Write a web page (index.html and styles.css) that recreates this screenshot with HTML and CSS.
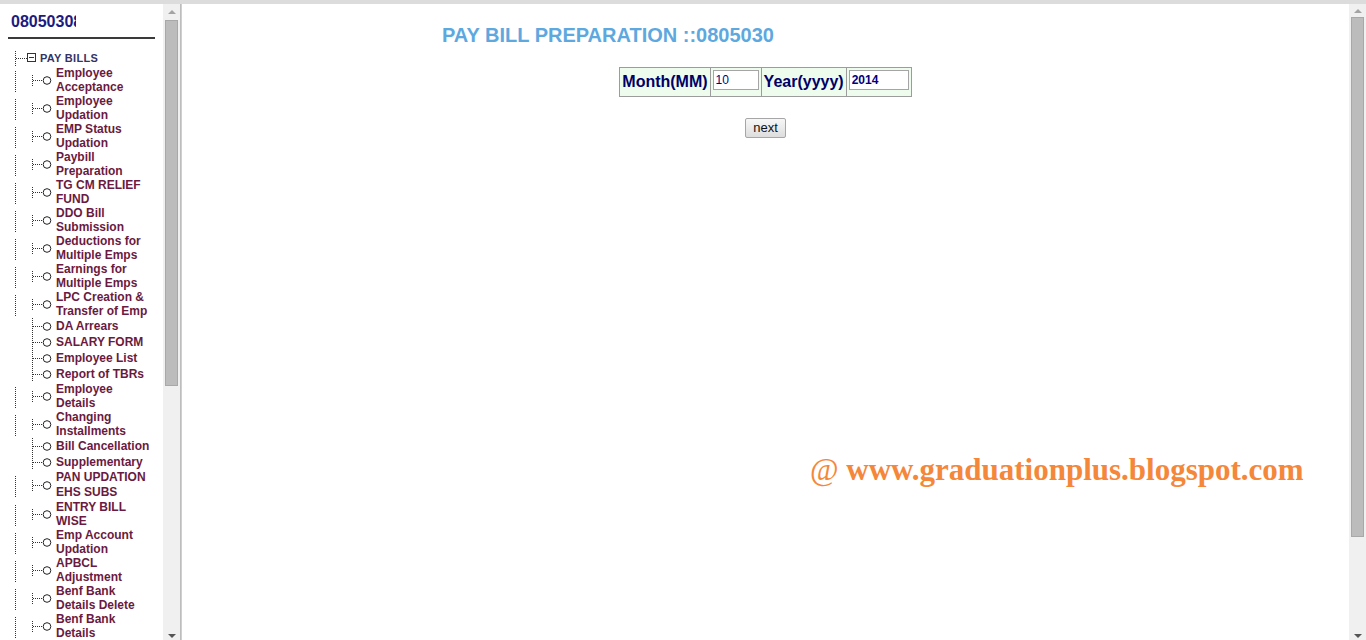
FILE: index.html
```html
<!DOCTYPE html>
<html>
<head>
<meta charset="utf-8">
<title>Pay Bill Preparation</title>
<link rel="stylesheet" href="styles.css">
</head>
<body>
<svg class="defs" width="0" height="0" aria-hidden="true">
  <symbol id="root" viewBox="0 0 40 16">
    <line x1="15.5" y1="1" x2="15.5" y2="16" stroke="#333" stroke-dasharray="1 1"/>
    <line x1="16" y1="8.5" x2="27" y2="8.5" stroke="#333" stroke-dasharray="1 1"/>
    <rect x="27.5" y="3.5" width="8" height="8" fill="#fff" stroke="#333"/>
    <line x1="29" y1="7.5" x2="34" y2="7.5" stroke="#333"/>
  </symbol>
  <symbol id="n1" viewBox="0 0 56 16">
    <line x1="32.5" y1="0" x2="32.5" y2="16" stroke="#333" stroke-dasharray="1 1"/>
    <line x1="33" y1="8.5" x2="43" y2="8.5" stroke="#333" stroke-dasharray="1 1"/>
    <circle cx="47" cy="8.5" r="3.8" fill="#fff" stroke="#222"/>
  </symbol>
  <symbol id="n2" viewBox="0 0 56 28">
    <line x1="15.5" y1="5" x2="15.5" y2="26" stroke="#333" stroke-dasharray="1 1"/>
    <line x1="32.5" y1="9" x2="32.5" y2="21" stroke="#333" stroke-dasharray="1 1"/>
    <line x1="33" y1="14.5" x2="43" y2="14.5" stroke="#333" stroke-dasharray="1 1"/>
    <circle cx="47" cy="14.5" r="3.8" fill="#fff" stroke="#222"/>
  </symbol>
</svg>
<div class="topbar"></div>
<div class="main">
  <aside class="left">
    <div class="left-content">
      <div class="ddo"><span class="ddo-code">08050308</span></div>
      <div class="tree">
        <div class="root"><svg width="40" height="16"><use href="#root"/></svg><span>PAY BILLS</span></div>
        <div class="item"><svg width="56" height="28"><use href="#n2"/></svg><a>Employee Acceptance</a></div>
        <div class="item"><svg width="56" height="28"><use href="#n2"/></svg><a>Employee Updation</a></div>
        <div class="item"><svg width="56" height="28"><use href="#n2"/></svg><a>EMP Status Updation</a></div>
        <div class="item"><svg width="56" height="28"><use href="#n2"/></svg><a>Paybill Preparation</a></div>
        <div class="item"><svg width="56" height="28"><use href="#n2"/></svg><a>TG CM RELIEF FUND</a></div>
        <div class="item"><svg width="56" height="28"><use href="#n2"/></svg><a>DDO Bill Submission</a></div>
        <div class="item"><svg width="56" height="28"><use href="#n2"/></svg><a>Deductions for Multiple Emps</a></div>
        <div class="item"><svg width="56" height="28"><use href="#n2"/></svg><a>Earnings for Multiple Emps</a></div>
        <div class="item"><svg width="56" height="28"><use href="#n2"/></svg><a>LPC Creation &amp; Transfer of Emp</a></div>
        <div class="item"><svg width="56" height="16"><use href="#n1"/></svg><a>DA Arrears</a></div>
        <div class="item"><svg width="56" height="16"><use href="#n1"/></svg><a>SALARY FORM</a></div>
        <div class="item"><svg width="56" height="16"><use href="#n1"/></svg><a>Employee List</a></div>
        <div class="item"><svg width="56" height="16"><use href="#n1"/></svg><a>Report of TBRs</a></div>
        <div class="item"><svg width="56" height="28"><use href="#n2"/></svg><a>Employee Details</a></div>
        <div class="item"><svg width="56" height="28"><use href="#n2"/></svg><a>Changing Installments</a></div>
        <div class="item"><svg width="56" height="16"><use href="#n1"/></svg><a>Bill Cancellation</a></div>
        <div class="item"><svg width="56" height="16"><use href="#n1"/></svg><a>Supplementary</a></div>
        <div class="item tall"><svg width="56" height="28"><use href="#n2"/></svg><a>PAN UPDATION EHS SUBS</a></div>
        <div class="item"><svg width="56" height="28"><use href="#n2"/></svg><a>ENTRY BILL WISE</a></div>
        <div class="item"><svg width="56" height="28"><use href="#n2"/></svg><a>Emp Account Updation</a></div>
        <div class="item"><svg width="56" height="28"><use href="#n2"/></svg><a>APBCL Adjustment</a></div>
        <div class="item"><svg width="56" height="28"><use href="#n2"/></svg><a>Benf Bank Details Delete</a></div>
        <div class="item"><svg width="56" height="28"><use href="#n2"/></svg><a>Benf Bank Details</a></div>
      </div>
    </div>
    <div class="sb">
      <div class="sb-up"></div>
      <div class="thumb"></div>
      <div class="sb-gap"></div>
      <div class="sb-down"></div>
    </div>
  </aside>
  <div class="divider"></div>
  <section class="right">
    <div class="right-content">
      <h1 class="page-title">PAY BILL PREPARATION ::0805030</h1>
      <table class="period">
        <tr>
          <td class="lbl">Month(MM)</td>
          <td><input class="inp inp-month" type="text" value="10"></td>
          <td class="lbl">Year(yyyy)</td>
          <td><input class="inp inp-year" type="text" value="2014"></td>
        </tr>
      </table>
      <button class="next" type="button">next</button>
      <div class="watermark"><span class="at">@</span> www.graduationplus.blogspot.com</div>
    </div>
    <div class="sb">
      <div class="sb-up"></div>
      <div class="thumb"></div>
      <div class="sb-gap"></div>
      <div class="sb-down"></div>
    </div>
  </section>
</div>
</body>
</html>
```
FILE: styles.css
```css
* { box-sizing: border-box; }
html, body { margin: 0; padding: 0; }
body {
  height: 640px;
  overflow: hidden;
  background: #fff;
  font-family: "Liberation Sans", Arial, sans-serif;
  display: flex;
  flex-direction: column;
}
.defs { display: block; width: 0; height: 0; flex: none; }
.topbar { height: 4px; background: #dcdcdc; flex: none; }
.main { flex: 1; display: flex; min-height: 0; }

/* left frame */
.left { width: 180px; flex: none; display: flex; }
.left-content { width: 163px; overflow: hidden; }
.divider { width: 2px; flex: none; background: #cfcfcf; border-left: 1px solid #bdbdbd; }

.ddo {
  margin: 0 8px;
  padding: 8px 0 5px 3px;
  border-bottom: 2px solid #3a3a3a;
}
.ddo-code {
  display: block;
  width: 65px;
  overflow: hidden;
  white-space: nowrap;
  font-size: 16px;
  line-height: 20px;
  font-weight: bold;
  color: #1b1b80;
}
.tree { margin-top: 11px; }
.root { display: flex; align-items: center; height: 16px; }
.root svg { display: block; flex: none; }
.root span {
  font-size: 11px;
  font-weight: bold;
  color: #333366;
  letter-spacing: 0.3px;
}
.item { display: flex; align-items: center; min-height: 16px; }
.item svg { display: block; flex: none; }
.item a {
  width: 96px;
  font-size: 12px;
  line-height: 14px;
  font-weight: bold;
  color: #6a1a40;
  text-decoration: none;
}
.item.tall a { line-height: 15px; }

/* scrollbars */
.sb {
  width: 17px;
  flex: none;
  background: #f0f0f0;
  display: flex;
  flex-direction: column;
  align-items: center;
}
.sb-up, .sb-down {
  flex: none;
  display: flex;
  align-items: center;
  justify-content: center;
}
.sb-up { height: 16px; }
.sb-up::before {
  content: "";
  border-left: 4px solid transparent;
  border-right: 4px solid transparent;
  border-bottom: 4px solid #a3a3a3;
}
.sb-down { height: 8px; }
.sb-down::before {
  content: "";
  border-left: 4px solid transparent;
  border-right: 4px solid transparent;
  border-top: 4px solid #555;
}
.thumb {
  width: 13px;
  flex: none;
  background: #bcbcbc;
  border: 1px solid #a8a8a8;
}
.left .thumb { height: 366px; }
.sb-gap { flex: 1; }
.right .sb-up { height: 13px; }
.right .thumb { height: 520px; }

/* right frame */
.right { flex: 1; display: flex; min-width: 0; }
.right-content { flex: 1; overflow: hidden; }
.page-title {
  margin: 19px 0 0 260px;
  font-size: 20px;
  line-height: 24px;
  font-weight: bold;
  color: #5ea8e0;
  white-space: nowrap;
}
.period {
  margin: 20px auto 0;
  border-collapse: collapse;
  background: #eefcee;
}
.period td {
  border: 1px solid #9c9c9c;
  padding: 2px 2px 6px;
}
.period td.lbl {
  padding: 4px 2px;
  vertical-align: middle;
  font-size: 16px;
  font-weight: bold;
  color: #000066;
  white-space: nowrap;
}
.inp {
  display: block;
  height: 20px;
  margin: 0;
  padding: 0 2px;
  border: 1px solid #a5a5a5;
  background: #fff;
  font-family: "Liberation Sans", Arial, sans-serif;
  font-size: 12px;
  color: #000080;
}
.inp-month { width: 46px; }
.inp-year { width: 60px; font-weight: bold; }
.next {
  display: block;
  margin: 21px auto 0;
  height: 20px;
  padding: 0 7px;
  border: 1px solid #a6a6a6;
  border-radius: 2px;
  background: linear-gradient(#f7f7f7, #dddddd);
  font-family: "Liberation Sans", Arial, sans-serif;
  font-size: 13px;
  line-height: 16px;
  color: #111;
}
.watermark {
  margin: 314px 0 0 628px;
  font-family: "Liberation Serif", "Times New Roman", serif;
  font-size: 31px;
  line-height: 36px;
  font-weight: bold;
  color: #f5873a;
  white-space: nowrap;
}
.watermark .at { font-weight: normal; }
```
